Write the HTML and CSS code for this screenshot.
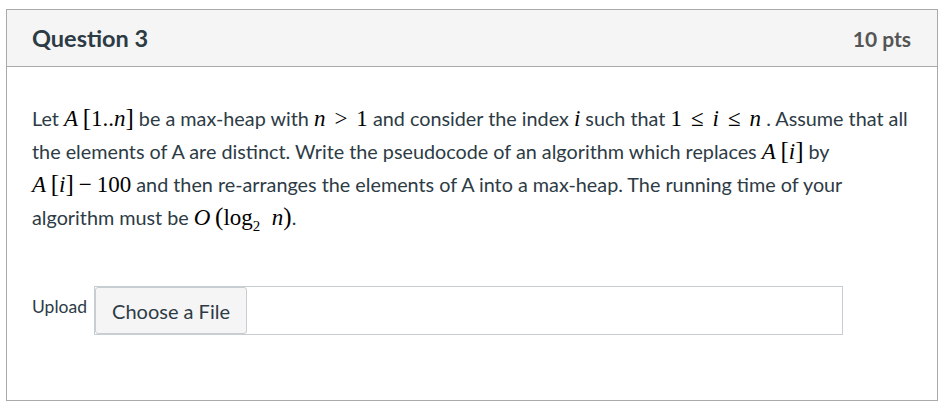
FILE: index.html
```html
<!DOCTYPE html>
<html>
<head>
<meta charset="utf-8">
<link rel="stylesheet" href="styles.css">
</head>
<body>
<div class="question">
  <div class="header">
    <div class="title">Question 3</div>
    <div class="pts">10 pts</div>
  </div>
  <div class="content">
    <p class="text">Let <span class="m"><i>A</i>&#8201;<span class="br">[</span>1..<i>n</i><span class="br">]</span></span> be a max-heap with <span class="m"><i>n</i><span class="rel">&gt;</span>1</span> and consider the index <span class="m"><i>i</i></span> such that <span class="m">1<span class="rel">&le;</span><i>i</i><span class="rel">&le;</span><i>n</i></span> . Assume that all<br>the elements of A are distinct. Write the pseudocode of an algorithm which replaces <span class="m"><i>A</i>&#8201;<span class="br">[</span><i>i</i><span class="br">]</span></span> by<br><span class="m"><i>A</i>&#8201;<span class="br">[</span><i>i</i><span class="br">]</span><span class="bin">&minus;</span>100</span> and then re-arranges the elements of A into a max-heap. The running time of your<br>algorithm must be <span class="m"><i>O</i>&#8201;<span class="br">(</span>log<sub>2</sub>&#8194;<i>n</i><span class="br">)</span></span>.</p>
    <div class="upload">
      <div class="label">Upload</div>
      <div class="file">
        <div class="btn">Choose a File</div>
      </div>
    </div>
  </div>
</div>
</body>
</html>
```
FILE: styles.css
```css
body {
  margin: 0;
  background: #ffffff;
  font-family: Lato, "Liberation Sans", sans-serif;
  color: #2d3b45;
}
.question {
  margin: 9px 0 0 6px;
  width: 930px;
  height: 390px;
  border: 1px solid #aaaaaa;
  display: flex;
  flex-direction: column;
}
.header {
  height: 56px;
  background: #f5f5f5;
  border-bottom: 1px solid #aaaaaa;
  display: flex;
  align-items: center;
  justify-content: space-between;
  padding: 0 26px 0 25px;
}
.title {
  font-size: 23.5px;
  font-weight: 700;
  color: #2d3b45;
}
.pts {
  font-size: 21px;
  font-weight: 700;
  color: #555555;
}
.content {
  padding: 35px 4px 0 25px;
}
.text {
  margin: 0;
  font-size: 19.8px;
  line-height: 32px;
  white-space: nowrap;
}
.m {
  font-family: "Liberation Serif", "DejaVu Serif", serif;
  font-size: 23px;
  color: #000000;
}
.m i {
  font-style: italic;
}
.rel {
  margin: 0 9px;
}
.bin {
  margin: 0 5px;
}
.br {
  font-size: 25px;
}
.m sub {
  font-size: 15px;
}
.upload {
  margin-top: 44px;
  display: flex;
  align-items: flex-start;
}
.label {
  font-size: 17.5px;
  padding-top: 10px;
  width: 62px;
}
.file {
  width: 747px;
  height: 47px;
  border: 1px solid #c7cdd1;
  display: flex;
  align-items: stretch;
}
.btn {
  width: 152px;
  background: #f5f5f5;
  border: 1px solid #c7cdd1;
  border-radius: 3px;
  font-size: 20px;
  display: flex;
  align-items: center;
  justify-content: center;
  padding-top: 2px;
  box-sizing: border-box;
}
```
